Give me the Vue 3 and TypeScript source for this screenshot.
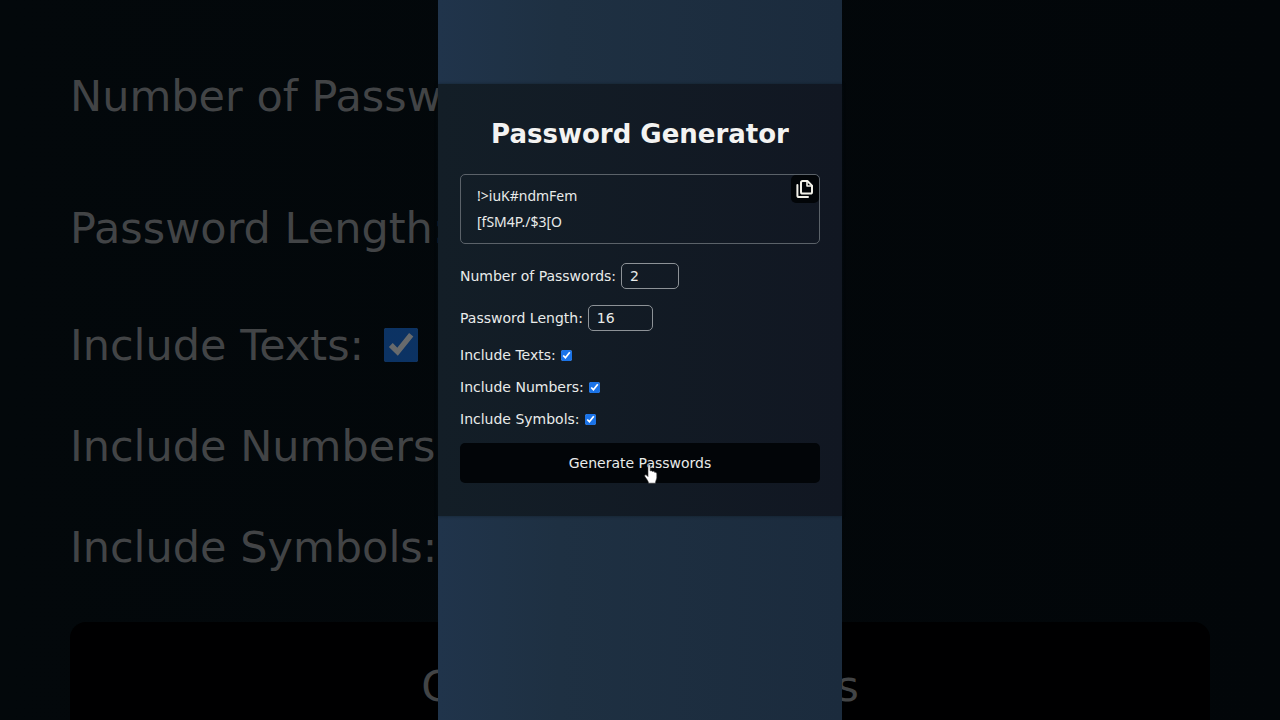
<script setup lang="ts">
import { ref } from 'vue'

interface Toggle {
  id: string
  label: string
  checked: boolean
}

const passwords = ref<string[]>(['!>iuK#ndmFem', '[fSM4P./$3[O'])
const count = ref<string>('2')
const length = ref<string>('16')
const toggles = ref<Toggle[]>([
  { id: 'texts', label: 'Include Texts:', checked: true },
  { id: 'numbers', label: 'Include Numbers:', checked: true },
  { id: 'symbols', label: 'Include Symbols:', checked: true },
])

function generate(): void {
  const sets = ['abcdefghijklmnopqrstuvwxyzABCDEFGHIJKLMNOPQRSTUVWXYZ', '0123456789', '!#$%&/<>[].']
  const pool = sets.filter((_, i) => toggles.value[i].checked).join('')
  if (!pool) return
  passwords.value = Array.from({ length: Number(count.value) || 0 }, () =>
    Array.from({ length: Number(length.value) || 0 }, () => pool[Math.floor(Math.random() * pool.length)]).join(''),
  )
}

function copy(): void {
  navigator.clipboard?.writeText(passwords.value.join('\n'))
}
</script>

<template>
  <div class="stage">
    <div class="backdrop" aria-hidden="true">
      <div class="row">
        <label for="back-count">Number of Passwords:</label>
        <input id="back-count" class="field short" type="text" :value="count" tabindex="-1" readonly />
      </div>
      <div class="row">
        <label for="back-length">Password Length:</label>
        <input id="back-length" class="field" type="text" :value="length" tabindex="-1" readonly />
      </div>
      <div v-for="t in toggles" :key="t.id" class="row check">
        <label :for="'back-' + t.id">{{ t.label }}</label>
        <input :id="'back-' + t.id" type="checkbox" :checked="t.checked" tabindex="-1" />
      </div>
      <button class="generate" type="button" tabindex="-1">Generate Passwords</button>
    </div>

    <main class="column">
      <section class="card">
        <h1>Password Generator</h1>
        <div class="output">
          <p v-for="(p, i) in passwords" :key="i">{{ p }}</p>
          <button class="copy" type="button" aria-label="Copy passwords" @click="copy">
            <svg viewBox="0 0 20 20" width="20" height="20" fill="none" stroke="#f2f1e9" stroke-width="2" stroke-linejoin="round" stroke-linecap="round">
              <path d="M7.6 2H12.4L17 6.6V13A1.6 1.6 0 0 1 15.4 14.6H7.6A1.6 1.6 0 0 1 6 13V3.6A1.6 1.6 0 0 1 7.6 2Z" />
              <path d="M12 2.5V7H16.5" stroke-width="1.6" />
              <path d="M2.4 6V16.4A1.6 1.6 0 0 0 4 18H13" />
            </svg>
          </button>
        </div>
        <form class="options" @submit.prevent="generate">
          <div class="row">
            <label for="count">Number of Passwords:</label>
            <input id="count" v-model="count" class="field short" type="text" inputmode="numeric" />
          </div>
          <div class="row">
            <label for="length">Password Length:</label>
            <input id="length" v-model="length" class="field" type="text" inputmode="numeric" />
          </div>
          <div v-for="t in toggles" :key="t.id" class="row check">
            <label :for="t.id">{{ t.label }}</label>
            <input :id="t.id" v-model="t.checked" type="checkbox" />
          </div>
          <button class="generate" type="submit">
            Generate Passwords
            <svg class="pointer" viewBox="0 0 14 20" width="14" height="20">
              <path d="M4 1.6C4 .3 6.2.3 6.2 1.6V7C7 6.4 8.2 6.7 8.4 7.5C9.3 7 10.4 7.4 10.6 8.3C11.6 8 12.8 8.6 12.8 9.8V13.4C12.8 15.4 11.6 16.4 11.4 19.2H4.6C4.4 17 2.2 14.7.9 12.6C.1 11.2 1.6 10.3 2.6 11.2L4 12.6Z" fill="#fff" stroke="#333" stroke-width=".6" />
            </svg>
          </button>
        </form>
      </section>
    </main>
  </div>
</template>

<style>
body {
  margin: 0;
  background: #020609;
}
</style>

<style scoped>
* {
  box-sizing: border-box;
}
.stage {
  position: relative;
  min-height: 100vh;
  display: flex;
  justify-content: center;
  overflow: hidden;
  background: linear-gradient(90deg, #03080b, #020609);
  color: #e9ebea;
  font-family: Verdana, "DejaVu Sans", sans-serif;
  font-size: 14px;
}
.row {
  display: flex;
  align-items: center;
  gap: 5px;
  height: 26px;
}
.row.check {
  height: 16px;
}
.row label {
  white-space: nowrap;
}
.row input[type='checkbox'] {
  width: 11px;
  height: 11px;
  margin: 0;
  accent-color: #1a73e8;
}
.field {
  width: 65px;
  height: 26px;
  padding: 0 8px;
  border: 1px solid #8d9297;
  border-radius: 5px;
  background: transparent;
  color: inherit;
  font: inherit;
}
.field.short {
  width: 58px;
}
.generate {
  position: relative;
  height: 40px;
  border: 0;
  border-radius: 5px;
  background: #020508;
  color: inherit;
  font: inherit;
}

.backdrop {
  position: absolute;
  inset: 0;
  display: flex;
  flex-direction: column;
  gap: 50px;
  padding: 55px 70px 0;
  color: #424446;
  font-size: 43px;
}
.backdrop .row {
  flex: none;
  gap: 20px;
  height: 82px;
}
.backdrop .row.check {
  height: 51px;
}
.backdrop .row input[type='checkbox'] {
  width: 34px;
  height: 34px;
  opacity: 0.4;
}
.backdrop .field {
  width: 180px;
  height: 82px;
  border-color: #25282a;
}
.backdrop .generate {
  flex: none;
  height: 127px;
  border-radius: 16px;
  background: #000001;
}

.column {
  position: relative;
  width: 100%;
  max-width: 404px;
  min-height: 100vh;
  padding-top: 84px;
  background: linear-gradient(90deg, #20344b, #1e3042 30%, #1b2b3d);
}
.card {
  padding: 32px 22px 33px;
  background: linear-gradient(90deg, #131e27, #111722);
  box-shadow: 0 0 3px rgba(8, 16, 26, 0.5);
}
h1 {
  margin: 0 0 22px;
  font-size: 26px;
  line-height: 36px;
  text-align: center;
  color: #f3f3f2;
  white-space: nowrap;
}
.output {
  position: relative;
  margin-bottom: 19px;
  padding: 8px 16px;
  border: 1px solid #5b6269;
  border-radius: 5px;
  font-family: "Noto Sans", sans-serif;
}
.output p {
  margin: 0;
  line-height: 26px;
}
.copy {
  position: absolute;
  top: 0;
  right: 0;
  display: grid;
  place-items: center;
  width: 28px;
  height: 28px;
  padding: 0;
  border: 0;
  border-radius: 5px;
  background: #020508;
}
.options {
  display: flex;
  flex-direction: column;
  gap: 16px;
}
.pointer {
  position: absolute;
  top: 21px;
  left: calc(50% + 4px);
}
</style>
